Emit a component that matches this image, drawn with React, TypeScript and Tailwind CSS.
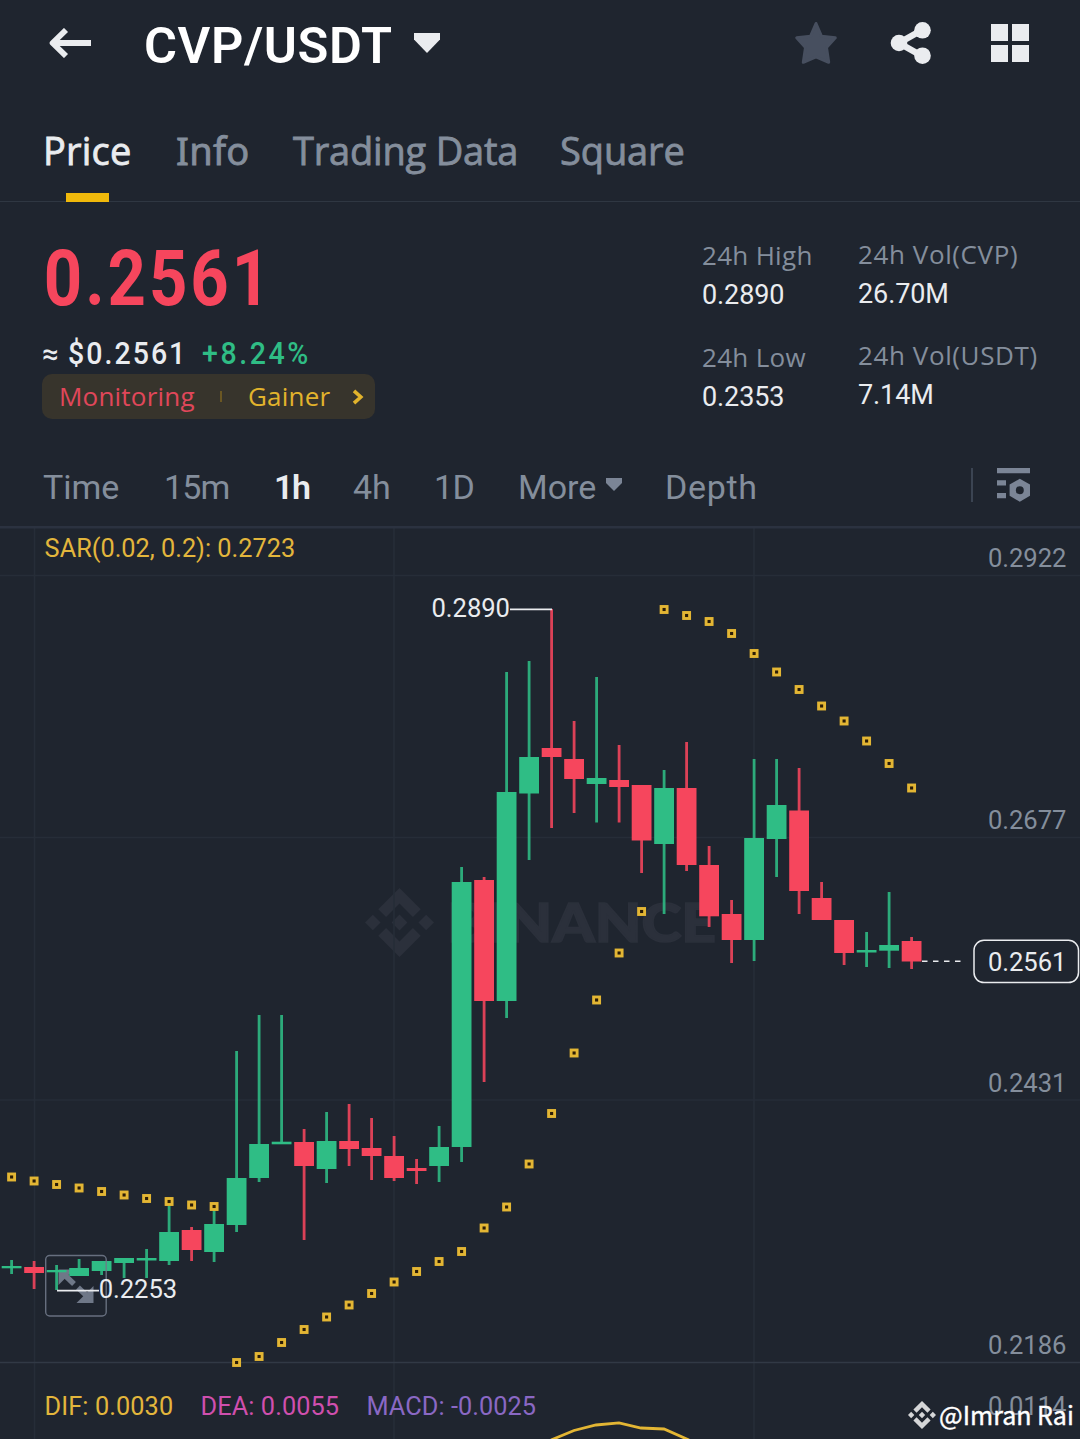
import React from "react";

const UP = "#2fbd85";
const DOWN = "#f6465d";
const STEP = 22.5;
const ORIGIN = 11.6;

type Candle = [high: number, low: number, top: number, bottom: number, up: 0 | 1];

// Pixel rows of each hourly candle, oldest first.
const candles: Candle[] = [
  [1260, 1274, 1266, 1268.3, 1],
  [1261, 1289, 1267, 1273, 0],
  [1265, 1290, 1270, 1272.3, 1],
  [1259, 1276, 1268, 1276, 1],
  [1261, 1275, 1261, 1271, 1],
  [1258, 1278, 1258, 1263, 1],
  [1249, 1278, 1258, 1260.5, 1],
  [1206, 1265, 1232, 1261, 1],
  [1227, 1261, 1230, 1250, 0],
  [1209, 1262, 1224, 1252, 1],
  [1051, 1232, 1178, 1225, 1],
  [1015, 1182, 1144, 1178, 1],
  [1015, 1144, 1141.7, 1144.3, 1],
  [1129, 1240, 1142, 1166, 0],
  [1112, 1183, 1141, 1169, 1],
  [1104, 1166, 1141, 1149, 0],
  [1118, 1180, 1148, 1156, 0],
  [1136, 1181, 1156, 1178, 0],
  [1159, 1184, 1168, 1171, 0],
  [1126, 1182, 1147, 1166, 1],
  [867, 1162, 882, 1147, 1],
  [877, 1082, 880, 1001, 0],
  [672, 1018, 792, 1001, 1],
  [661, 860, 757, 793.5, 1],
  [609, 828, 748, 757, 0],
  [721, 813, 759, 779, 0],
  [677, 822.5, 778, 784, 1],
  [745, 822.5, 780, 787, 0],
  [785, 873, 785, 840.5, 0],
  [770, 914, 788, 844, 1],
  [742, 871, 788, 865, 0],
  [846, 927, 865, 916.3, 0],
  [900, 963, 914, 940, 0],
  [759, 961, 838, 940, 1],
  [759, 877, 805, 839, 1],
  [768, 914, 810.5, 891, 0],
  [882, 920, 898, 920, 0],
  [920, 965, 920, 953, 0],
  [932, 967, 950, 952.5, 1],
  [892, 968, 945, 950.7, 1],
  [937, 969, 941, 961.5, 0],
];

const sar = [
  1177, 1181, 1184.5, 1188, 1191.5, 1195, 1198.5, 1201.5, 1205, 1206.5, 1362.5, 1356.5, 1342.5, 1329.5, 1317,
  1305, 1293.5, 1282, 1271.5, 1261.5, 1251.5, 1228, 1207, 1164, 1113.5, 1053, 1000, 953, 911.5, 609.5, 615.5,
  621.5, 633.5, 653.5, 672, 689.5, 706, 721, 741, 763.5, 788,
];

const axis: [string, number][] = [
  ["0.2922", 567],
  ["0.2677", 829],
  ["0.2431", 1092],
  ["0.2186", 1354],
  ["0.0114", 1415],
];

function Logo({ className }: { className?: string }) {
  return (
    <svg viewBox="0 0 126.6 126.6" className={className} fill="currentColor">
      <path d="M38.7 53.2 63.3 28.6 87.9 53.2 102.2 38.9 63.3 0 24.4 38.9z" />
      <path d="M0 63.3 14.3 49 28.6 63.3 14.3 77.6z" />
      <path d="M38.7 73.4 63.3 98 87.9 73.4 102.2 87.7 63.3 126.6 24.4 87.7z" />
      <path d="M98 63.3 112.3 49 126.6 63.3 112.3 77.6z" />
      <path d="M77.8 63.3 63.3 48.8 48.8 63.3 63.3 77.8z" />
    </svg>
  );
}

function Header() {
  return (
    <header className="flex h-[88px] items-center pb-[2px] pl-[49px] pr-[51px] text-[#eaecef]">
      <svg className="h-[30px] w-[42px]" viewBox="0 0 42 30" fill="none" stroke="currentColor">
        <path d="M42 15H5" strokeWidth="5.8" />
        <path d="M17 2 3.6 15 17 28" strokeWidth="5.8" strokeLinejoin="round" />
      </svg>
      <h1 className="ml-[53px] w-[270px] pt-[6px] font-['Roboto',sans-serif] text-[50.5px] font-semibold leading-[60px] tracking-[0.6px] text-white whitespace-nowrap">
        CVP/USDT
      </h1>
      <svg className="h-[20px] w-[26px]" viewBox="0 0 26 20" fill="currentColor">
        <path d="M0 0h26v6.5L13 20 0 6.500z" />
      </svg>
      <svg className="ml-auto h-[44px] w-[44px] text-[#474f5f]" viewBox="0 0 44 44" fill="currentColor" stroke="currentColor" strokeWidth="3" strokeLinejoin="round">
        <path d="M22 2.500 27.400 15.200 41.300 16.800 32.500 26.500 34.700 41.300 22 35.800 9.300 41.300 11.500 26.500 2.700 16.800 16.600 15.200z" />
      </svg>
      <svg className="ml-[52px] h-[42px] w-[42px]" viewBox="0 0 42 42" fill="currentColor">
        <path d="M32 8 9 21 32 34" fill="none" stroke="currentColor" strokeWidth="6.500" />
        <circle cx="32.500" cy="8.300" r="8.300" />
        <circle cx="9" cy="21" r="8.300" />
        <circle cx="32.500" cy="33.700" r="8.300" />
      </svg>
      <div className="ml-[59px] grid grid-cols-2 gap-x-[4px] gap-y-[4px]">
        <i className="h-[17px] w-[17px] bg-current" />
        <i className="h-[17px] w-[17px] bg-current" />
        <i className="h-[17px] w-[17px] bg-current" />
        <i className="h-[17px] w-[17px] bg-current" />
      </div>
    </header>
  );
}

function Tabs() {
  return (
    <nav className="flex h-[114px] border-b border-[#2f3742] pl-[43px] pt-[36px] font-['Open_Sans','Noto_Sans',sans-serif] text-[38px] leading-[52px] text-[#848e9c] whitespace-nowrap [-webkit-text-stroke:0.8px]">
      <div className="flex w-[133px] flex-col text-[#eaecef]">
        <span className="tracking-[0.2px]">Price</span>
        <i className="ml-[23px] mt-[17px] h-[9px] w-[43px] shrink-0 bg-[#f0b90b]" />
      </div>
      <span className="w-[117px] font-['Noto_Sans',sans-serif] tracking-[0.3px]">Info</span>
      <span className="w-[267px] tracking-[-0.2px]">Trading Data</span>
      <span className="tracking-[-0.1px]">Square</span>
    </nav>
  );
}

function Stat({ label, value }: { label: string; value: string }) {
  return (
    <div className="h-[101.5px] whitespace-nowrap">
      <div className="font-['Open_Sans',sans-serif] text-[26px] leading-[39px] text-[#848e9c]">{label}</div>
      <div className="font-['Roboto',sans-serif] text-[27px] leading-[40px] tracking-[-0.1px] text-[#eaecef]">{value}</div>
    </div>
  );
}

function Summary() {
  return (
    <section className="flex h-[246px]">
      <div className="w-[702px] pl-[42px] pt-[35px]">
        <div className="w-[250px] origin-left scale-x-[0.87] pl-[2px] font-['Roboto',sans-serif] text-[77px] font-bold leading-[84px] tracking-[3.4px] text-[#f6465d] whitespace-nowrap">
          0.2561
        </div>
        <div className="mt-[14px] flex font-['Roboto',sans-serif] text-[31px] font-medium leading-[38px] text-[#eaecef] whitespace-nowrap">
          <span className="w-[26px] text-[29px]">≈</span>
          <span className="w-[134px] origin-left scale-x-[0.92] tracking-[2.2px]">$0.2561</span>
          <span className="origin-left scale-x-[0.92] tracking-[2.8px] text-[#2fbd85]">+8.24%</span>
        </div>
        <div className="mt-[1px] flex h-[45px] w-[333px] items-center rounded-[10px] bg-[#37342c] pl-[17px] font-['Open_Sans',sans-serif] text-[26px] leading-[45px] whitespace-nowrap">
          <span className="w-[161px] tracking-[0.2px] text-[#e0475a]">Monitoring</span>
          <i className="h-[11px] w-[2px] bg-[#6b5723]" />
          <span className="ml-[26px] w-[104px] tracking-[0.2px] text-[#e2b32c]">Gainer</span>
          <svg className="h-[16px] w-[12px]" viewBox="0 0 12 16" fill="none" stroke="#e2b32c" strokeWidth="3.600">
            <path d="M2 1.800 8.800 8 2 14.200" />
          </svg>
        </div>
      </div>
      <div className="w-[156px] pt-[34px] tracking-[0.3px]">
        <Stat label="24h High" value="0.2890" />
        <Stat label="24h Low" value="0.2353" />
      </div>
      <div className="pt-[32.5px] tracking-[0.6px]">
        <Stat label="24h Vol(CVP)" value="26.70M" />
        <Stat label="24h Vol(USDT)" value="7.14M" />
      </div>
    </section>
  );
}

function Intervals() {
  return (
    <nav className="flex h-[78px] items-center pl-[43px] pr-[50px] font-['Roboto',sans-serif] text-[34px] leading-[78px] text-[#848e9c] whitespace-nowrap">
      <span className="w-[121px]">Time</span>
      <span className="w-[110px] tracking-[-0.8px]">15m</span>
      <span className="w-[79px] font-semibold tracking-[-1.5px] text-[#eaecef]">1h</span>
      <span className="w-[81px]">4h</span>
      <span className="w-[84px] tracking-[-0.5px]">1D</span>
      <span className="w-[88px]">More</span>
      <svg className="mb-[6px] h-[13px] w-[16px]" viewBox="0 0 16 13" fill="#7b8596">
        <path d="M0 0h16v5L8 13 0 5z" />
      </svg>
      <span className="ml-[43px] tracking-[0.7px]">Depth</span>
      <i className="mb-[5px] ml-auto h-[34px] w-[2px] bg-[#3b4452]" />
      <svg className="mb-[5px] ml-[24px] h-[34px] w-[33px]" viewBox="0 0 33 34" fill="#7b8596">
        <path d="M0 0h33v5.300H0zM0 12.300h9v5.200H0zM0 25h9v5.200H0z" />
        <path fillRule="evenodd" d="M22.800 10.800 33 16.600v11.200l-10.200 5.900-10.200-5.900V16.600zM22.800 18.200a4 4 0 1 0 0 8 4 4 0 0 0 0-8z" />
      </svg>
    </nav>
  );
}

function Chart() {
  return (
    <section className="relative h-[913px]">
      <Logo className="absolute left-[365px] top-[362px] h-[69px] w-[69px] text-[#2b303b]" />
      <svg className="absolute inset-0 h-[913px] w-[1080px] font-['Roboto',sans-serif]" viewBox="0 526 1080 913">
        <text
          x="447"
          y="941.500"
          fontSize="52.500"
          textLength="269"
          lengthAdjust="spacingAndGlyphs"
          fill="#2b303b"
          stroke="#2b303b"
          strokeWidth="1.600"
          className="font-['Lato',sans-serif] font-black"
        >
          BINANCE
        </text>
        <g stroke="#262d38" strokeWidth="1.600">
          <path d="M34.500 528V1439M394 528V1439M754 528V1439M0 575.500H1080M0 837.500H1080M0 1100H1080" />
          <path d="M0 1362.500H1080" stroke="#313945" />
          <path d="M0 527.300H1080" stroke="#2b3240" strokeWidth="2.600" />
        </g>

        <g fill="#6f7888" stroke="#6f7888">
          <path d="M58.500 1269.500h15.500L58.500 1285z" stroke="none" />
          <path d="M62 1272.500 74 1284" strokeWidth="5.500" />
          <path d="M93.500 1286v17h-17z" stroke="none" />
          <path d="M78 1287.500 89 1298" strokeWidth="5.500" />
        </g>

        {candles.map(([high, low, top, bottom, up], i) => {
          const x = ORIGIN + i * STEP;
          return (
            <g key={i} fill={up ? UP : DOWN}>
              <rect x={x - 1.4} y={high} width="2.8" height={low - high} opacity="0.88" />
              <rect x={x - 9.9} y={top} width="19.8" height={bottom - top} />
            </g>
          );
        })}

        {sar.map((y, i) => (
          <rect key={i} x={ORIGIN + i * STEP - 3} y={y - 3} width="6" height="6" fill="#2b1c06" stroke="#e3b634" strokeWidth="2.900" />
        ))}

        <rect x="45.700" y="1255.500" width="60.500" height="60.500" rx="4" fill="none" stroke="#6f7888" strokeWidth="1.400" opacity="0.9" />

        <g stroke="#eaecef" strokeWidth="1.600" fill="none">
          <path d="M510 609.400H552M57 1290.600H99" />
          <path d="M922 961.300H962" strokeDasharray="5.500 5.500" />
        </g>

        <g fontSize="25.600" fill="#eaecef">
          <text x="431.500" y="617" textLength="78.500">0.2890</text>
          <text x="98.700" y="1298" textLength="78.500">0.2253</text>
        </g>
        <g fontSize="25.600" fill="#848e9c">
          {axis.map(([label, y]) => (
            <text key={label} x="987.900" y={y} textLength="78.500">
              {label}
            </text>
          ))}
        </g>
        <rect x="974" y="940.300" width="104.500" height="42.300" rx="10" fill="#1f252f" stroke="#eaecef" strokeWidth="1.500" />
        <text x="987.900" y="971" fontSize="25.600" textLength="78.500" fill="#eaecef">0.2561</text>

        <g fontSize="25.300">
          <text x="44.600" y="557" textLength="250.500" fill="#e3b63c">SAR(0.02, 0.2): 0.2723</text>
          <text x="44.600" y="1415" textLength="128.500" fill="#e3b63c">DIF: 0.0030</text>
          <text x="200.500" y="1415" textLength="138.500" fill="#cf4fae">DEA: 0.0055</text>
          <text x="366.500" y="1415" textLength="169.500" fill="#8a68c4">MACD: -0.0025</text>
        </g>
        <path d="M551 1440 574 1430.500 596 1425 619 1422.800 641 1428 664 1429 689 1440" fill="none" stroke="#e3b634" strokeWidth="2.800" />
      </svg>

      <div className="absolute bottom-[5px] left-[908px] flex h-[38px] items-center text-white">
        <Logo className="h-[28px] w-[28px] text-[#d5d6d8]" />
        <span className="mb-[3px] ml-[3px] font-['Noto_Sans_CJK_SC',sans-serif] text-[25px] leading-[38px] whitespace-nowrap [-webkit-text-stroke:0.4px]">@Imran Rai</span>
      </div>
    </section>
  );
}

export default function App() {
  return (
    <main className="h-[1439px] w-[1080px] overflow-hidden bg-[#1f252f]">
      <Header />
      <Tabs />
      <Summary />
      <Intervals />
      <Chart />
    </main>
  );
}
